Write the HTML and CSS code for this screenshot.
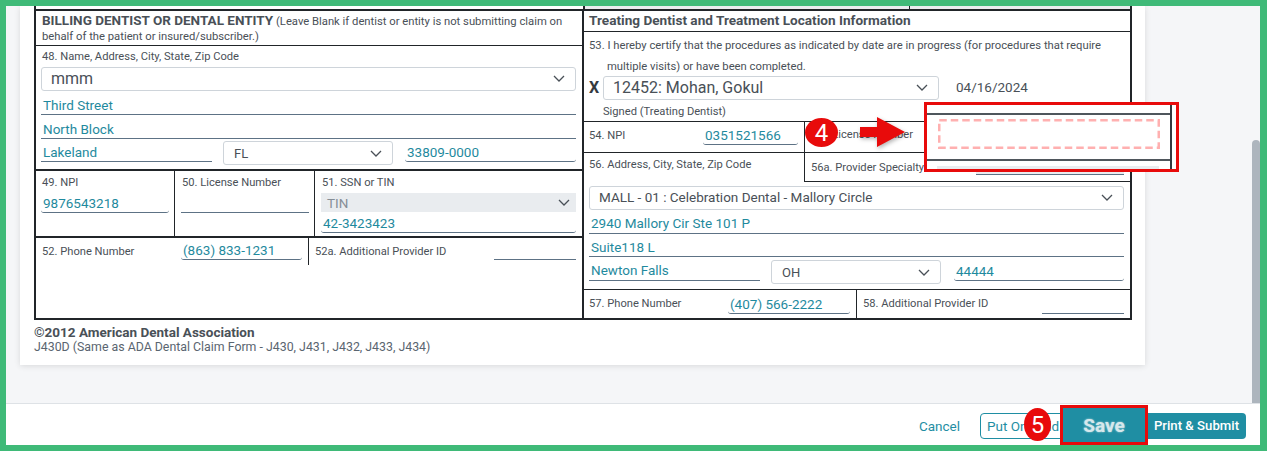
FILE: index.html
```html
<!DOCTYPE html>
<html lang="en">
<head>
<meta charset="utf-8">
<title>Dental Claim Form</title>
<link rel="stylesheet" href="styles.css">
</head>
<body>
<svg class="defs" width="0" height="0"><defs><symbol id="chev" viewBox="0 0 12 7"><path d="M1 1l5 5 5-5" fill="none" stroke="currentColor" stroke-width="1.3"/></symbol></defs></svg>
<div class="frame">
  <div class="main">
    <div class="card">
      <div class="strip"><div class="strip-l"></div><div class="strip-m"></div><div class="strip-r"></div></div>
      <div class="form">
        <div class="col col-left">
          <div class="head-l"><b>BILLING DENTIST OR DENTAL ENTITY</b> (Leave Blank if dentist or entity is not submitting claim on<br>behalf of the patient or insured/subscriber.)</div>
          <div class="sec48">
            <div class="lbl">48. Name, Address, City, State, Zip Code</div>
            <div class="sel sel-lg"><span>mmm</span><svg class="chev"><use href="#chev"/></svg></div>
            <div class="fld">Third Street</div>
            <div class="fld">North Block</div>
            <div class="city">
              <div class="fld w-city">Lakeland</div>
              <div class="sel sel-st w-st"><span>FL</span><svg class="chev"><use href="#chev"/></svg></div>
              <div class="fld grow rounded">33809-0000</div>
            </div>
          </div>
          <div class="ids">
            <div class="idcell c49"><div class="lbl">49. NPI</div><div class="fld rounded mt">9876543218</div></div>
            <div class="idcell c50"><div class="lbl">50. License Number</div><div class="fld mt"></div></div>
            <div class="idcell c51"><div class="lbl">51. SSN or TIN</div><div class="sel-gray"><span>TIN</span><svg class="chev"><use href="#chev"/></svg></div><div class="fld rounded tin">42-3423423</div></div>
          </div>
          <div class="phones">
            <div class="ph-a"><div class="lbl">52. Phone Number</div><div class="fld rounded w-ph1">(863) 833-1231</div></div>
            <div class="ph-b"><div class="lbl">52a. Additional Provider ID</div><div class="fld w-add"></div></div>
          </div>
        </div>
        <div class="col col-right">
          <div class="head-r">Treating Dentist and Treatment Location Information</div>
          <div class="sec53">
            <div class="cert">53. I hereby certify that the procedures as indicated by date are in progress (for procedures that require</div>
            <div class="cert cert2">multiple visits) or have been completed.</div>
            <div class="signrow">
              <span class="x">X</span>
              <div class="sel sel-lg w-doc"><span>12452: Mohan, Gokul</span><svg class="chev"><use href="#chev"/></svg></div>
              <span class="date">04/16/2024</span>
            </div>
            <div class="lbl signed">Signed (Treating Dentist)</div>
          </div>
          <div class="npirow">
            <div class="npi-a"><div class="lbl">54. NPI</div><div class="fld rounded w-npi">0351521566</div></div>
            <div class="npi-b"><div class="lbl">55. License Number</div></div>
          </div>
          <div class="addrhead">
            <div class="addr-a"><div class="lbl">56. Address, City, State, Zip Code</div></div>
            <div class="addr-b"><div class="lbl">56a. Provider Specialty</div><div class="spec"></div></div>
          </div>
          <div class="sec56">
            <div class="sel sel-md"><span>MALL - 01 : Celebration Dental - Mallory Circle</span><svg class="chev"><use href="#chev"/></svg></div>
            <div class="fld lh19">2940 Mallory Cir Ste 101 P</div>
            <div class="fld">Suite118 L</div>
            <div class="city city-r">
              <div class="fld lh19 w-city2">Newton Falls</div>
              <div class="sel sel-st w-st2"><span>OH</span><svg class="chev"><use href="#chev"/></svg></div>
              <div class="fld grow rounded">44444</div>
            </div>
          </div>
          <div class="lastrow">
            <div class="last-a"><div class="lbl">57. Phone Number</div><div class="fld rounded w-ph2">(407) 566-2222</div></div>
            <div class="last-b"><div class="lbl">58. Additional Provider ID</div><div class="fld w-add"></div></div>
          </div>
        </div>
      </div>
      <div class="copy"><b>©2012 American Dental Association</b><br><span>J430D (Same as ADA Dental Claim Form - J430, J431, J432, J433, J434)</span></div>
    </div>
    <div class="scroll"><div class="thumb"></div></div>
  </div>
  <div class="footer">
    <a class="cancel">Cancel</a>
    <div class="btn-out">Put On Hold</div>
    <div class="btn-save">Save</div>
    <div class="btn-print">Print &amp; Submit</div>
  </div>

  <div class="callout">
    <div class="c-h c-h1"></div>
    <svg class="c-dash" viewBox="0 0 222 30"><rect x="1.25" y="1.25" width="219.5" height="27.5" fill="none" stroke="#ffb0b0" stroke-width="2.5" stroke-dasharray="7.5 4"/></svg>
    <div class="c-h c-h2"></div>
    <div class="c-gray"></div>
    <div class="c-v"></div>
  </div>
  <svg class="arrow" viewBox="0 0 46 30"><path d="M0 10h17V0l28 15-28 15V20H0z" fill="#e80b0b"/></svg>
  <div class="badge badge4">4</div>
  <div class="badge badge5">5</div>
</div>
</body>
</html>
```
FILE: styles.css
```css
* { box-sizing: border-box; }
html, body { margin: 0; padding: 0; }
body { width: 1267px; height: 451px; overflow: hidden; font-family: Roboto, "Liberation Sans", sans-serif; color: #495057; }
.defs { position: absolute; }
.frame { position: relative; width: 1267px; height: 451px; border: solid #3fba78; border-width: 6px 7px 6px 6px; display: flex; flex-direction: column; background: #f5f6f8; }
.main { height: 397px; display: flex; padding-left: 14px; overflow: hidden; }
.card { width: 1125px; height: 359px; background: #fff; box-shadow: 0 1px 6px rgba(0,0,0,.12); padding: 0 13px 0 14px; flex: none; }
.strip { height: 3px; display: grid; grid-template-columns: 549px 326px 223px; }
.strip-l { border-left: 2px solid #212529; }
.strip-m { border-left: 2px solid #212529; background: #e9ecef; }
.strip-r { border-left: 1px solid #212529; border-right: 2px solid #212529; background: #e9ecef; }
.form { width: 1098px; height: 311px; border: 2px solid #212529; display: grid; grid-template-columns: 548px 546px; }
.col-left { border-right: 2px solid #212529; }
.lbl { font-size: 11.15px; line-height: 13px; color: #495057; white-space: nowrap; }
.fld { height: 20px; line-height: 20px; border-bottom: 1px solid #5d7285; color: #1f8a9e; font-size: 13.5px; padding-left: 2px; white-space: nowrap; }
.lh19 { line-height: 18px; }
.rounded { border-radius: 0 0 3px 3px; }
.grow { flex: 1; }
.sel { display: flex; align-items: center; justify-content: space-between; border: 1px solid #ced4da; border-radius: 3px; background: #fff; height: 24px; color: #495057; }
.sel-lg { font-size: 16px; padding: 0 10px 1px 9px; }
.sel-md { font-size: 13.5px; padding: 0 10px 2px 9px; }
.sel-st { font-size: 13px; padding: 0 10px 0 10px; }
.chev { width: 12px; height: 7px; color: #495057; flex: none; }
.head-l { height: 35px; border-bottom: 1px solid #212529; padding: 2px 6px 0; font-size: 11.25px; line-height: 15px; color: #495057; white-space: nowrap; }
.head-l b { font-size: 13.5px; }
.sec48 { height: 125px; border-bottom: 2px solid #212529; padding: 4px 6px 0 5px; display: flex; flex-direction: column; }
.sec48 .lbl { padding-left: 1px; height: 16px; margin-bottom: 1px; }
.sec48 .sel-lg { margin-bottom: 4px; }
.sec48 .fld { margin-bottom: 4px; }
.sec48 .city .fld, .sec56 .city .fld { margin-bottom: 0; }
.city { display: flex; align-items: flex-start; }
.sec48 .city { margin-top: -2px; }
.sec48 .city .fld { margin-top: 1px; }
.w-city { width: 171px; }
.w-st { width: 170px; margin: 0 12px 0 11px; }
.ids { height: 67px; border-bottom: 2px solid #212529; display: grid; grid-template-columns: 139px 140px 1fr; }
.idcell { padding: 5px 5px 0 5px; border-right: 1px solid #212529; }
.idcell .lbl { padding-left: 1px; }
.c51 { border-right: 0; padding-left: 6px; padding-right: 6px; }
.mt { margin-top: 4px; }
.c50 { padding-left: 6px; }
.sel-gray { height: 19px; margin-top: 4px; background: #e9ecef; display: flex; align-items: center; justify-content: space-between; font-size: 13.5px; color: #868e96; padding: 0 6px; }
.tin { margin-top: 1px; }
.phones { display: flex; height: 27px; }
.ph-a { width: 273px; border-right: 1px solid #212529; display: flex; justify-content: space-between; padding: 7px 6px 0 6px; }
.ph-a .fld, .ph-b .fld { margin-top: -5px; }
.ph-b { flex: 1; display: flex; justify-content: space-between; padding: 7px 6px 0 6px; }
.w-ph1 { width: 121px; }
.w-add { width: 82px; }
.head-r { height: 21px; border-bottom: 1px solid #212529; font-size: 13.6px; font-weight: 700; padding: 1px 6px 0 5px; line-height: 17px; color: #495057; white-space: nowrap; }
.sec53 { height: 90px; border-bottom: 1px solid #212529; padding: 7px 6px 0 5px; }
.cert { font-size: 11.25px; line-height: 14px; white-space: nowrap; }
.cert2 { margin-top: 7px; padding-left: 18px; }
.signrow { display: flex; align-items: center; height: 24px; margin-top: 2px; }
.x { font-weight: 700; font-size: 16px; width: 14px; color: #343a40; padding-bottom: 2px; }
.w-doc { width: 336px; }
.date { margin-left: 17px; font-size: 13.5px; padding-bottom: 3px; }
.signed { margin-left: 14px; margin-top: 5px; }
.npirow { display: flex; height: 31px; border-bottom: 1px solid #212529; }
.npi-a { width: 221px; border-right: 1px solid #212529; display: flex; justify-content: space-between; padding: 7px 6px 0 5px; }
.npi-a .fld { margin-top: -4px; }
.npi-b { padding: 6px 6px 0 9px; }
.w-npi { width: 95px; }
.addrhead { display: flex; height: 29px; margin-bottom: 3px; }
.addr-a { width: 221px; padding: 5px 6px 0 5px; border-right: 1px solid #212529; }
.addr-b { flex: 1; display: flex; justify-content: space-between; padding: 8px 6px 0 6px; border-bottom: 1px solid #212529; }
.spec { width: 148px; height: 15px; margin-top: -1px; background: #e9ecef; border-bottom: 1px solid #5d7285; }
.sec56 { height: 105px; padding: 1px 6px 0 5px; border-bottom: 1px solid #212529; }
.sec56 .sel-md { margin-bottom: 4px; }
.sec56 .fld { margin-bottom: 3px; }
.city-r { margin-top: 1px; }
.sec56 .city .fld { margin-top: 1px; }
.w-city2 { width: 171px; }
.w-st2 { width: 170px; margin: 0 13px 0 11px; }
.lastrow { display: flex; height: 28px; }
.last-a { width: 273px; border-right: 1px solid #212529; display: flex; justify-content: space-between; padding: 7px 6px 0 5px; }
.last-a .fld, .last-b .fld { margin-top: -3px; }
.last-b { flex: 1; display: flex; justify-content: space-between; padding: 7px 6px 0; }
.w-ph2 { width: 122px; }
.copy { margin-top: 5px; font-size: 12.35px; line-height: 14px; color: #5a6570; }
.copy b { font-size: 13.5px; color: #495057; }
.scroll { width: 8px; margin-left: 107px; position: relative; flex: none; }
.thumb { position: absolute; top: 134px; left: 0; width: 8px; height: 263px; background: #adb5bd; border-radius: 4px 4px 0 0; }
.footer { flex: 1; background: #fff; border-top: 1px solid #dee2e6; display: flex; align-items: flex-start; justify-content: flex-end; padding: 9px 14px 0 0; }
.cancel { font-size: 13.5px; color: #1f8ea3; margin-right: 20px; line-height: 26px; }
.btn-out { width: 90px; height: 26px; border: 1px solid #1f8ea3; border-radius: 4px; font-size: 13.5px; color: #1f8ea3; line-height: 24px; padding-left: 6px; margin-right: -10px; white-space: nowrap; }
.btn-save { position: relative; width: 88px; height: 40px; margin-top: -8px; margin-right: -1px; background: #1f8ea3; border: 3px solid #e80b0b; color: #d6e8ec; font-size: 19px; font-weight: 700; text-align: center; line-height: 35px; text-shadow: 0 0 2px rgba(255,255,255,.7); }
.btn-print { width: 99px; height: 26px; background: #1f8ea3; border-radius: 0 4px 4px 0; color: #fff; font-size: 13.2px; font-weight: 500; line-height: 26px; text-align: center; white-space: nowrap; }
.callout { position: absolute; left: 918px; top: 96px; width: 255px; height: 70px; border: 3px solid #e80b0b; background: #fff; overflow: hidden; }
.c-h { position: absolute; left: 0; width: 243px; height: 2px; background: #4f565c; }
.c-h1 { top: 8px; }
.c-h2 { top: 54px; }
.c-dash { position: absolute; left: 11px; top: 14px; width: 222px; height: 30px; }
.c-gray { position: absolute; left: 10px; top: 61px; width: 222px; height: 6px; background: #e9ecef; }
.c-v { position: absolute; left: 243px; top: 0; width: 2px; height: 64px; background: #343a40; }
.arrow { position: absolute; left: 854px; top: 111px; width: 46px; height: 30px; filter: drop-shadow(1px 2px 2px rgba(0,0,0,.3)); }
.badge { position: absolute; background: #e80b0b; color: #fff; display: flex; align-items: center; justify-content: center; border-radius: 50%; font-size: 24px; }
.badge4 { left: 799px; top: 112px; width: 33px; height: 29px; }
.badge5 { left: 1018px; top: 402px; width: 27px; height: 33px; }
```
